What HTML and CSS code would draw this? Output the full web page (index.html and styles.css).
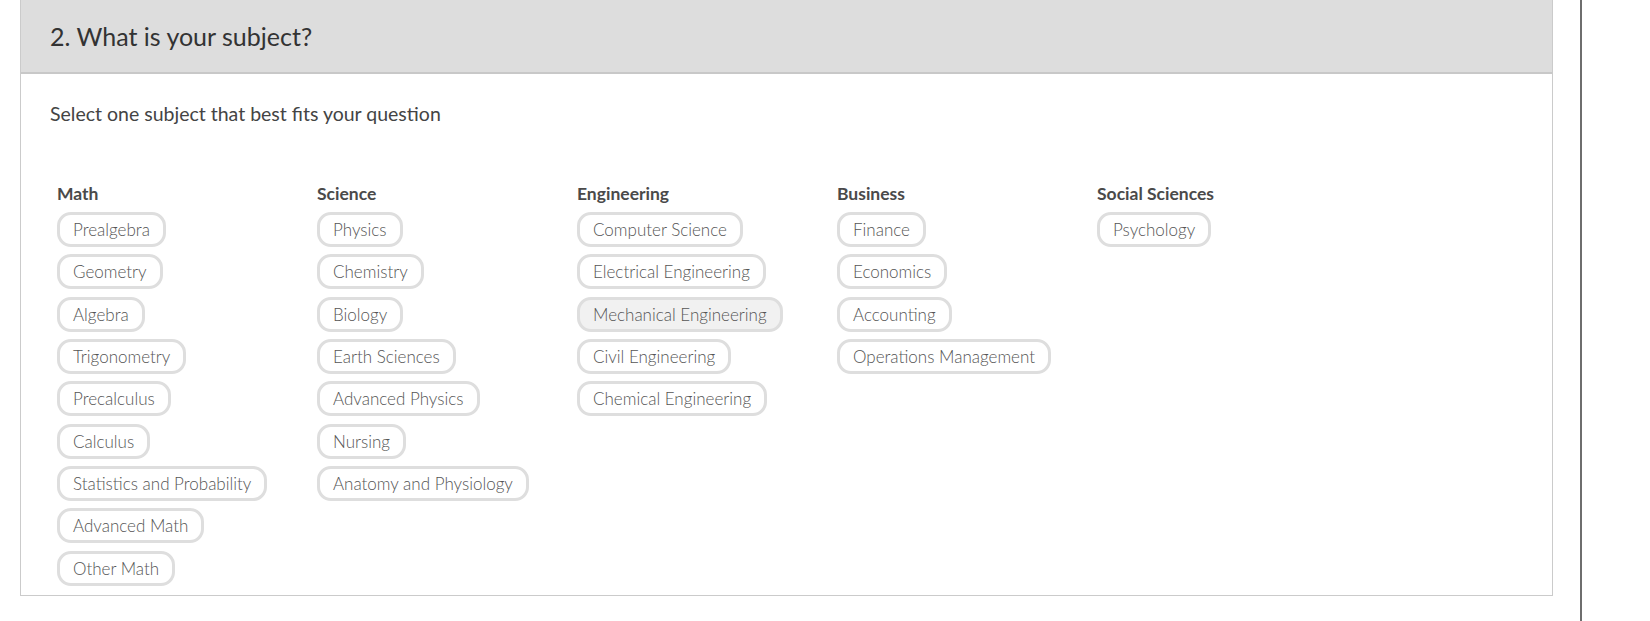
FILE: index.html
```html
<!DOCTYPE html>
<html lang="en">
<head>
  <meta charset="UTF-8">
  <meta name="viewport" content="width=device-width, initial-scale=1.0">
  <title>Choose a subject</title>
  <link rel="stylesheet" href="styles.css">
</head>
<body>
  <div class="page">
    <div class="card">
      <div class="card-header">
        <h2>2. What is your subject?</h2>
      </div>
      <div class="card-body">
        <p class="hint">Select one subject that best fits your question</p>

        <div class="subjects">
          <div class="group">
            <h3>Math</h3>
            <button class="pill">Prealgebra</button>
            <button class="pill">Geometry</button>
            <button class="pill">Algebra</button>
            <button class="pill">Trigonometry</button>
            <button class="pill">Precalculus</button>
            <button class="pill">Calculus</button>
            <button class="pill">Statistics and Probability</button>
            <button class="pill">Advanced Math</button>
            <button class="pill">Other Math</button>
          </div>

          <div class="group">
            <h3>Science</h3>
            <button class="pill">Physics</button>
            <button class="pill">Chemistry</button>
            <button class="pill">Biology</button>
            <button class="pill">Earth Sciences</button>
            <button class="pill">Advanced Physics</button>
            <button class="pill">Nursing</button>
            <button class="pill">Anatomy and Physiology</button>
          </div>

          <div class="group">
            <h3>Engineering</h3>
            <button class="pill">Computer Science</button>
            <button class="pill">Electrical Engineering</button>
            <button class="pill active">Mechanical Engineering</button>
            <button class="pill">Civil Engineering</button>
            <button class="pill">Chemical Engineering</button>
          </div>

          <div class="group">
            <h3>Business</h3>
            <button class="pill">Finance</button>
            <button class="pill">Economics</button>
            <button class="pill">Accounting</button>
            <button class="pill">Operations Management</button>
          </div>

          <div class="group">
            <h3>Social Sciences</h3>
            <button class="pill">Psychology</button>
          </div>
        </div>
      </div>
    </div>
    <div class="side"></div>
  </div>
</body>
</html>
```

FILE: styles.css
```css
/* General styling */
body {
  font-family: 'Lato', 'Liberation Sans', sans-serif;
  background: #fff;
  color: #333;
  margin: 0;
  padding: 0;
}

.page {
  display: flex;
  height: 621px;
  overflow: hidden;
}

.card {
  width: 1531px;
  margin-left: 20px;
  align-self: flex-start;
  border: 1px solid #cbcbcb;
  border-top: none;
}

.card-header {
  height: 72px;
  background: #dddddd;
  border-bottom: 2px solid #c8c8c8;
  padding-left: 29px;
  display: flex;
  align-items: flex-start;
}

.card-header h2 {
  margin: 20px 0 0;
  font-size: 25px;
  line-height: 32px;
  font-weight: 400;
  color: #333;
}

.card-body {
  padding: 27px 29px 2px;
}

.hint {
  margin: 0;
  font-size: 19.5px;
  line-height: 26px;
  color: #444;
}

.subjects {
  display: flex;
  margin-top: 57px;
  padding-left: 7px;
}

.group {
  width: 260px;
  display: flex;
  flex-direction: column;
  align-items: flex-start;
}

.group h3 {
  margin: 0 0 8px;
  font-size: 17.5px;
  line-height: 20px;
  font-weight: 700;
  color: #4a4a4a;
}

.pill {
  font-family: inherit;
  font-size: 17px;
  font-weight: 300;
  color: #555;
  background: #fff;
  border: 3px solid #dedede;
  border-radius: 14px;
  height: 35px;
  padding: 0 13px;
  margin-bottom: 7.35px;
  cursor: pointer;
}

.pill.active {
  background: #f1f1f1;
}

.pill:hover {
  background: #f6f6f6;
}

.side {
  margin-left: 27px;
  width: 2px;
  height: 100%;
  background: #6e6e6e;
}
```
